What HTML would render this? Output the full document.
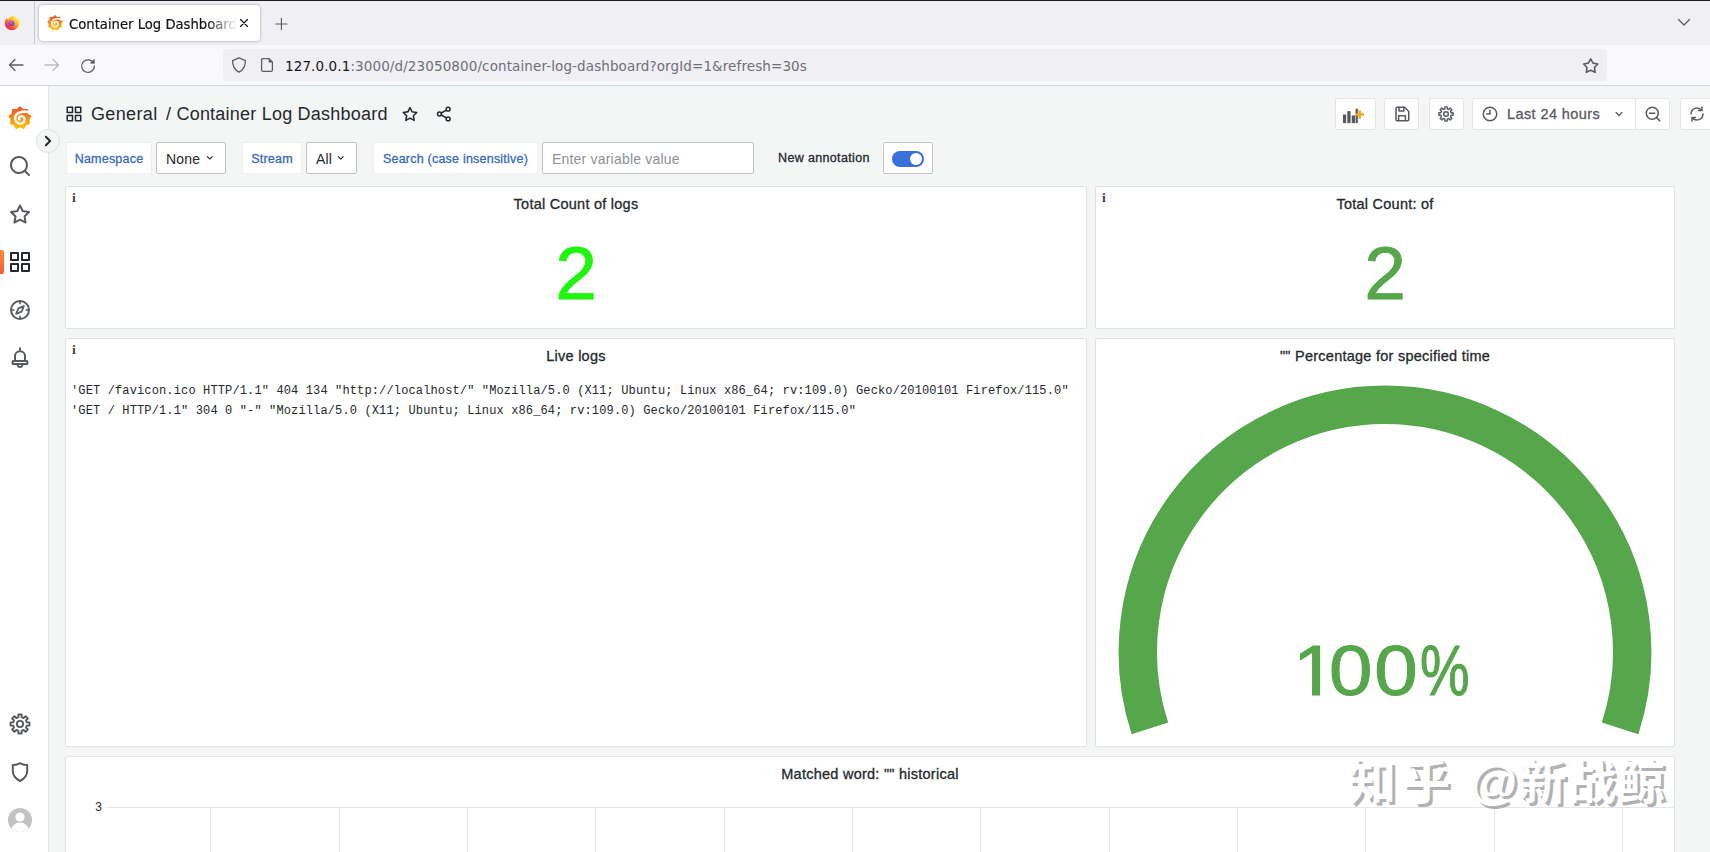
<!DOCTYPE html>
<html lang="en">
<head>
<meta charset="utf-8">
<title>Container Log Dashboard</title>
<style>
*{box-sizing:border-box;margin:0;padding:0}
html,body{width:1710px;height:852px;overflow:hidden;background:#f4f5f5}
body{font-family:"Liberation Sans","Noto Sans CJK SC",sans-serif;color:#24292e;position:relative}
.abs{position:absolute}
svg{display:block;overflow:visible}
/* ---------- browser chrome ---------- */
#tabbar{left:0;top:0;width:1710px;height:45px;background:#f0f0f4}
#topline{left:0;top:0;width:1710px;height:1px;background:#1c1b22}
#tabsep{left:34px;top:1px;width:1px;height:43px;background:#c9c9d0}
#tab{left:39px;top:5px;width:221px;height:36px;background:#fff;border-radius:4px;box-shadow:0 0 3px rgba(0,0,0,.35)}
#tabtitle{left:30px;top:10px;-webkit-text-stroke:.2px #15141a;width:169px;height:20px;font-family:'DejaVu Sans','Liberation Sans',sans-serif;font-size:13.2px;line-height:20px;color:#15141a;white-space:nowrap;overflow:hidden;-webkit-mask-image:linear-gradient(to right,#000 138px,transparent 168px);mask-image:linear-gradient(to right,#000 138px,transparent 168px)}
#navbar{left:0;top:45px;width:1710px;height:41px;background:#f9f9fb;border-bottom:1px solid #d4d4da}
#urlbar{left:223px;top:49px;width:1384px;height:32px;background:#f0f0f4;border-radius:4px}
#url{left:285px;top:56px;font-family:'DejaVu Sans','Liberation Sans',sans-serif;font-size:13.5px;letter-spacing:.11px;line-height:20px;color:#6f6f78;white-space:nowrap}
#url b{font-weight:normal;color:#15141a}
/* ---------- grafana ---------- */
#side{left:0;top:86px;width:49px;height:766px;background:#fff;border-right:1px solid #e3e4e5}
#expander{left:36px;top:129px;width:24px;height:24px;border-radius:12px;background:#f4f5f5;border:1px solid #e0e1e2}
#active{left:0;top:250px;width:4px;height:24px;border-radius:0 2px 2px 0;background:linear-gradient(#ff8833,#f55f3e)}
.title{font-size:18px;line-height:24px;white-space:nowrap;color:#24292e}
.tbtn{top:98px;height:32px;background:#fff;border:1px solid #e4e5e6;border-radius:2px}
.lbl{top:142px;height:32px;background:#fff;border:1px solid #eef0f0;border-radius:2px;font-size:12.5px;letter-spacing:.22px;line-height:32px;color:#3a6ab8;-webkit-text-stroke:.3px #3a6ab8;text-align:center;white-space:nowrap}
.sel{top:142px;height:32px;background:#fff;border:1px solid #bfc1c3;border-radius:2px;font-size:14px;letter-spacing:.2px;line-height:33px;color:#24292e;white-space:nowrap}
.panel{background:#fff;border:1px solid #e1e2e3;border-radius:2px}
.ptitle{font-size:14.5px;letter-spacing:.25px;line-height:20px;color:#24292e;-webkit-text-stroke:.3px #24292e;text-align:center;white-space:nowrap}
.info{font-family:"Liberation Serif",serif;font-weight:bold;font-size:13.5px;line-height:14px;color:#3d4043}
.big{font-weight:normal;text-align:center;white-space:nowrap}
.log{font-family:"Liberation Mono",monospace;font-size:12px;line-height:20px;color:#24292e;white-space:pre;letter-spacing:.135px}
.vline{top:807px;width:1px;height:45px;background:#e6e7e8}
</style>
</head>
<body>
<!-- ======= Firefox chrome ======= -->
<div id="tabbar" class="abs"></div>
<div id="topline" class="abs"></div>
<div id="tabsep" class="abs"></div>
<div id="tab" class="abs">
  <div id="tabtitle" class="abs">Container Log Dashboard</div>
</div>
<div id="navbar" class="abs"></div>
<div id="urlbar" class="abs"></div>
<div id="url" class="abs"><b>127.0.0.1</b>:3000/d/23050800/container-log-dashboard?orgId=1&amp;refresh=30s</div>

<!-- firefox chrome icons -->
<svg class="abs" style="left:4px;top:15px" width="16" height="16" viewBox="0 0 16 16">
<defs><linearGradient id="ffg" x1="0.95" y1="0.1" x2="0.2" y2="0.95"><stop offset="0" stop-color="#fff0a0" stop-opacity=".55"/><stop offset="0.22" stop-color="#ffd93c"/><stop offset="0.5" stop-color="#ff9a1f"/><stop offset="0.78" stop-color="#fb3f43"/><stop offset="1" stop-color="#e2246e"/></linearGradient>
<radialGradient id="ffp" cx="0.45" cy="0.35" r="0.7"><stop offset="0" stop-color="#c07af5"/><stop offset="1" stop-color="#5a2abf"/></radialGradient></defs>
<path d="M8 1.2 C10 0.6 12.6 1.6 14 3.6 C15.6 5.8 15.8 9 14.4 11.4 C13 13.8 10.6 15.2 8 15.2 C4 15.2 0.8 12 0.8 8.2 C0.8 6 1.6 4.2 2.8 2.8 C3 3.6 3.4 4.2 4 4.6 C4.8 3 6.2 1.8 8 1.2 Z" fill="url(#ffg)"/>
<circle cx="7.4" cy="8.2" r="2.8" fill="url(#ffp)"/>
<path d="M4.2 7.2 C4.4 5.6 5.6 4.6 7.2 4.6 C6.4 5 6 5.4 5.8 6 C5.2 6.2 4.6 6.6 4.2 7.2Z" fill="#ff8a1a"/>
</svg>
<svg class="abs" style="left:47px;top:15px" width="16" height="16" viewBox="0 0 24 24">
<defs><linearGradient id="glg2" x1="0" y1="1" x2="0" y2="0"><stop offset="0" stop-color="#fbca0a"/><stop offset="1" stop-color="#ee4f27"/></linearGradient></defs>
<path d="M22.4 12.0 L22.2 12.4 L22.0 12.7 L21.8 13.0 L21.6 13.4 L21.6 13.7 L21.5 14.0 L21.5 14.4 L21.6 14.8 L21.7 15.1 L21.8 15.6 L22.0 16.0 L22.1 16.5 L22.2 17.0 L22.1 17.4 L22.0 17.8 L21.7 18.1 L21.4 18.3 L21.0 18.5 L20.5 18.6 L20.0 18.7 L19.6 18.8 L19.2 18.9 L18.8 19.1 L18.5 19.2 L18.2 19.4 L18.0 19.7 L17.8 20.0 L17.6 20.3 L17.4 20.6 L17.2 21.0 L17.0 21.5 L16.9 22.0 L16.6 22.4 L16.3 22.7 L16.0 22.9 L15.6 22.9 L15.1 22.9 L14.7 22.7 L14.2 22.5 L13.8 22.2 L13.4 22.1 L13.0 21.9 L12.7 21.8 L12.3 21.7 L12.0 21.7 L11.7 21.7 L11.3 21.8 L11.0 21.9 L10.6 22.1 L10.2 22.2 L9.8 22.5 L9.3 22.7 L8.9 22.9 L8.4 22.9 L8.0 22.9 L7.7 22.7 L7.4 22.4 L7.1 22.0 L7.0 21.5 L6.8 21.0 L6.6 20.6 L6.4 20.3 L6.2 20.0 L6.0 19.7 L5.8 19.4 L5.5 19.2 L5.2 19.1 L4.8 18.9 L4.4 18.8 L4.0 18.7 L3.5 18.6 L3.0 18.5 L2.6 18.3 L2.3 18.1 L2.0 17.8 L1.9 17.4 L1.8 17.0 L1.9 16.5 L2.0 16.0 L2.2 15.6 L2.3 15.1 L2.4 14.8 L2.5 14.4 L2.5 14.0 L2.4 13.7 L2.4 13.4 L2.2 13.0 L2.0 12.7 L1.8 12.4 L1.6 12.0 L1.3 11.6 L1.0 11.2 L0.7 10.8 L0.6 10.4 L0.6 10.0 L0.8 9.6 L1.0 9.3 L1.4 8.9 L1.8 8.7 L2.2 8.4 L2.6 8.2 L2.9 7.9 L3.2 7.7 L3.4 7.4 L3.6 7.1 L3.7 6.8 L3.8 6.5 L3.9 6.1 L4.0 5.7 L4.0 5.3 L4.0 4.8 L4.0 4.3 L4.1 3.8 L4.3 3.5 L4.6 3.2 L4.9 2.9 L5.3 2.8 L5.8 2.8 L6.3 2.9 L6.8 3.0 L7.2 3.0 L7.6 3.0 L8.0 3.0 L8.3 3.0 L8.7 2.9 L9.0 2.7 L9.3 2.5 L9.6 2.3 L9.9 2.0 L10.2 1.8 L10.5 1.3 L10.8 1.0 L11.2 0.7 L11.6 0.5 L12.0 0.4 L12.4 0.5 L12.8 0.7 L13.2 1.0 L13.5 1.3 L13.8 1.8 L14.1 2.0 L14.4 2.3 L14.7 2.5 L15.0 2.7 L15.3 2.9 L15.7 3.0 L16.0 3.0 L16.4 3.0 L16.8 3.0 L17.2 3.0 L17.7 2.9 L18.2 2.8 L18.7 2.8 L19.1 2.9 L19.4 3.2 L19.7 3.5 L19.9 3.8 L20.0 4.3 L20.0 4.8 L20.0 5.3 L20.0 5.7 L20.1 6.1 L20.2 6.5 L20.3 6.8 L20.4 7.1 L20.6 7.4 L20.8 7.7 L21.1 7.9 L21.4 8.2 L21.8 8.4 L22.2 8.7 L22.6 8.9 L23.0 9.3 L23.2 9.6 L23.4 10.0 L23.4 10.4 L23.3 10.8 L23.0 11.2 L22.7 11.6Z" fill="url(#glg2)"/>
<path d="M22.3 7.8 L20.4 6.5 L18.4 5.7 L16.4 5.5 L14.6 5.7 L13.0 6.3 L11.7 6.5 L10.4 7.0 L9.3 7.8 L8.4 8.7 L7.8 9.7 L7.3 10.9 L7.2 12.1 L7.3 13.3 L7.6 14.4 L8.1 15.4 L8.8 16.2 L9.7 16.9 L10.6 17.3 L11.6 17.5 L12.6 17.6 L13.6 17.4 L14.4 17.0 L15.2 16.4 L15.8 15.8 L16.2 15.0 L16.4 14.2 L16.5 13.4 L16.4 12.6 L16.2 11.9 L15.8 11.3 L15.3 10.8 L14.7 10.5 L14.1 10.2 L13.5 10.1 L12.9 10.2 L12.4 10.4 L11.9 10.6 L11.5 11.0 L11.2 11.4 L11.0 11.8 L11.0 12.2 L11.0 12.6 L11.1 13.0 L11.3 13.3 L11.5 13.6" fill="none" stroke="#fff" stroke-width="2.3" stroke-linecap="round" stroke-linejoin="round"/>
</svg>
<svg class="abs" style="left:236px;top:15px" width="16" height="16" viewBox="0 0 16 16"><path d="M4.5 4.5l7 7M11.5 4.5l-7 7" fill="none" stroke="#15141a" stroke-width="1.15" stroke-linecap="round"/></svg>
<svg class="abs" style="left:273px;top:16px" width="16" height="16" viewBox="0 0 16 16"><path d="M8.4 2.4v11.2M2.8 8h11.2" fill="none" stroke="#5b5b66" stroke-width="1.15" stroke-linecap="round"/></svg>
<svg class="abs" style="left:1676px;top:14px" width="16" height="16" viewBox="0 0 16 16"><path d="M2.5 5.5L8 11l5.5-5.5" fill="none" stroke="#5b5b66" stroke-width="1.3" stroke-linecap="round" stroke-linejoin="round"/></svg>
<svg class="abs" style="left:8px;top:57px" width="16" height="16" viewBox="0 0 16 16"><path d="M15 8H1.5M7 2.5L1.5 8 7 13.5" fill="none" stroke="#5b5b66" stroke-width="1.3" stroke-linecap="round" stroke-linejoin="round"/></svg>
<svg class="abs" style="left:44px;top:57px" width="16" height="16" viewBox="0 0 16 16"><path d="M1 8h13.5M9 2.5L14.5 8 9 13.5" fill="none" stroke="#b9b9c0" stroke-width="1.3" stroke-linecap="round" stroke-linejoin="round"/></svg>
<svg class="abs" style="left:80px;top:57px" width="16" height="16" viewBox="0 0 16 16"><path d="M13.6 6.2A6.3 6.3 0 1 0 14.3 9" fill="none" stroke="#5b5b66" stroke-width="1.3" stroke-linecap="round"/><path d="M14.6 1.6v5h-5z" fill="#5b5b66"/></svg>
<svg class="abs" style="left:231px;top:57px" width="16" height="16" viewBox="0 0 16 16"><path d="M8 0.9 L14.4 3.6 C14.6 9 12.2 13 8 15.2 C3.8 13 1.4 9 1.6 3.6 Z" fill="none" stroke="#5b5b66" stroke-width="1.3" stroke-linejoin="round"/></svg>
<svg class="abs" style="left:259px;top:57px" width="16" height="16" viewBox="0 0 16 16"><path d="M3.6 1.6H10L13.4 5V13a1.4 1.4 0 0 1-1.4 1.4H4A1.4 1.4 0 0 1 2.6 13V2.6A1 1 0 0 1 3.6 1.6Z" fill="none" stroke="#5b5b66" stroke-width="1.3" stroke-linejoin="round"/><path d="M9.6 1.6L13.4 5.4H9.6Z" fill="#5b5b66"/></svg>
<svg class="abs" style="left:1581.4px;top:55.6px" width="19.4" height="19.4" viewBox="0 0 24 24"><path d="M12.00 3.60L14.88 8.84L20.75 9.96L16.66 14.31L17.41 20.24L12.00 17.70L6.59 20.24L7.34 14.31L3.25 9.96L9.12 8.84Z" fill="none" stroke="#5b5b66" stroke-width="2" stroke-linejoin="round"/></svg>

<!-- ======= Grafana ======= -->
<div id="side" class="abs"></div>
<div id="active" class="abs"></div>
<div id="expander" class="abs"></div>

<div class="abs title" style="left:91px;top:102px;letter-spacing:.35px">General</div>
<div class="abs title" style="left:166px;top:102px;letter-spacing:.22px">/ Container Log Dashboard</div>

<div class="abs tbtn" style="left:1335px;width:41px"></div>
<div class="abs tbtn" style="left:1384px;width:35px"></div>
<div class="abs tbtn" style="left:1429px;width:35px"></div>
<div class="abs tbtn" style="left:1472px;width:164px"></div>
<div class="abs tbtn" style="left:1635px;width:35px"></div>
<div class="abs tbtn" style="left:1680px;width:40px"></div>
<div class="abs" id="tptext" style="left:1507px;top:104px;font-size:14.5px;letter-spacing:.4px;line-height:20px;color:#575b5f;-webkit-text-stroke:.3px #575b5f;white-space:nowrap">Last 24 hours</div>

<div class="abs lbl" style="left:66px;width:86px">Namespace</div>
<div class="abs sel" style="left:156px;width:70px;padding-left:9px">None</div>
<div class="abs lbl" style="left:242px;width:60px">Stream</div>
<div class="abs sel" style="left:306px;width:51px;padding-left:9px">All</div>
<div class="abs lbl" style="left:373px;width:165px">Search (case insensitive)</div>
<div class="abs sel" style="left:542px;width:212px;padding-left:9px;color:#8e9194">Enter variable value</div>
<div class="abs" id="newann" style="left:778px;top:149px;font-size:12.5px;letter-spacing:.35px;line-height:18px;color:#24292e;-webkit-text-stroke:.3px #24292e;white-space:nowrap">New annotation</div>
<div class="abs sel" style="left:883px;width:50px;border-color:#c4c6c8"></div>
<div class="abs" style="left:892px;top:151px;width:32px;height:16px;border-radius:8px;background:#3871dc"></div>
<div class="abs" style="left:910px;top:153px;width:12px;height:12px;border-radius:6px;background:#fff"></div>

<!-- sidebar icons -->
<svg class="abs" style="left:8px;top:105.5px" width="24" height="24" viewBox="0 0 24 24">
<defs><linearGradient id="glg" x1="0" y1="1" x2="0" y2="0"><stop offset="0" stop-color="#fbca0a"/><stop offset="1" stop-color="#ee4f27"/></linearGradient></defs>
<path d="M22.4 12.0 L22.2 12.4 L22.0 12.7 L21.8 13.0 L21.6 13.4 L21.6 13.7 L21.5 14.0 L21.5 14.4 L21.6 14.8 L21.7 15.1 L21.8 15.6 L22.0 16.0 L22.1 16.5 L22.2 17.0 L22.1 17.4 L22.0 17.8 L21.7 18.1 L21.4 18.3 L21.0 18.5 L20.5 18.6 L20.0 18.7 L19.6 18.8 L19.2 18.9 L18.8 19.1 L18.5 19.2 L18.2 19.4 L18.0 19.7 L17.8 20.0 L17.6 20.3 L17.4 20.6 L17.2 21.0 L17.0 21.5 L16.9 22.0 L16.6 22.4 L16.3 22.7 L16.0 22.9 L15.6 22.9 L15.1 22.9 L14.7 22.7 L14.2 22.5 L13.8 22.2 L13.4 22.1 L13.0 21.9 L12.7 21.8 L12.3 21.7 L12.0 21.7 L11.7 21.7 L11.3 21.8 L11.0 21.9 L10.6 22.1 L10.2 22.2 L9.8 22.5 L9.3 22.7 L8.9 22.9 L8.4 22.9 L8.0 22.9 L7.7 22.7 L7.4 22.4 L7.1 22.0 L7.0 21.5 L6.8 21.0 L6.6 20.6 L6.4 20.3 L6.2 20.0 L6.0 19.7 L5.8 19.4 L5.5 19.2 L5.2 19.1 L4.8 18.9 L4.4 18.8 L4.0 18.7 L3.5 18.6 L3.0 18.5 L2.6 18.3 L2.3 18.1 L2.0 17.8 L1.9 17.4 L1.8 17.0 L1.9 16.5 L2.0 16.0 L2.2 15.6 L2.3 15.1 L2.4 14.8 L2.5 14.4 L2.5 14.0 L2.4 13.7 L2.4 13.4 L2.2 13.0 L2.0 12.7 L1.8 12.4 L1.6 12.0 L1.3 11.6 L1.0 11.2 L0.7 10.8 L0.6 10.4 L0.6 10.0 L0.8 9.6 L1.0 9.3 L1.4 8.9 L1.8 8.7 L2.2 8.4 L2.6 8.2 L2.9 7.9 L3.2 7.7 L3.4 7.4 L3.6 7.1 L3.7 6.8 L3.8 6.5 L3.9 6.1 L4.0 5.7 L4.0 5.3 L4.0 4.8 L4.0 4.3 L4.1 3.8 L4.3 3.5 L4.6 3.2 L4.9 2.9 L5.3 2.8 L5.8 2.8 L6.3 2.9 L6.8 3.0 L7.2 3.0 L7.6 3.0 L8.0 3.0 L8.3 3.0 L8.7 2.9 L9.0 2.7 L9.3 2.5 L9.6 2.3 L9.9 2.0 L10.2 1.8 L10.5 1.3 L10.8 1.0 L11.2 0.7 L11.6 0.5 L12.0 0.4 L12.4 0.5 L12.8 0.7 L13.2 1.0 L13.5 1.3 L13.8 1.8 L14.1 2.0 L14.4 2.3 L14.7 2.5 L15.0 2.7 L15.3 2.9 L15.7 3.0 L16.0 3.0 L16.4 3.0 L16.8 3.0 L17.2 3.0 L17.7 2.9 L18.2 2.8 L18.7 2.8 L19.1 2.9 L19.4 3.2 L19.7 3.5 L19.9 3.8 L20.0 4.3 L20.0 4.8 L20.0 5.3 L20.0 5.7 L20.1 6.1 L20.2 6.5 L20.3 6.8 L20.4 7.1 L20.6 7.4 L20.8 7.7 L21.1 7.9 L21.4 8.2 L21.8 8.4 L22.2 8.7 L22.6 8.9 L23.0 9.3 L23.2 9.6 L23.4 10.0 L23.4 10.4 L23.3 10.8 L23.0 11.2 L22.7 11.6Z" fill="url(#glg)"/>
<path d="M22.3 7.8 L20.4 6.5 L18.4 5.7 L16.4 5.5 L14.6 5.7 L13.0 6.3 L11.7 6.5 L10.4 7.0 L9.3 7.8 L8.4 8.7 L7.8 9.7 L7.3 10.9 L7.2 12.1 L7.3 13.3 L7.6 14.4 L8.1 15.4 L8.8 16.2 L9.7 16.9 L10.6 17.3 L11.6 17.5 L12.6 17.6 L13.6 17.4 L14.4 17.0 L15.2 16.4 L15.8 15.8 L16.2 15.0 L16.4 14.2 L16.5 13.4 L16.4 12.6 L16.2 11.9 L15.8 11.3 L15.3 10.8 L14.7 10.5 L14.1 10.2 L13.5 10.1 L12.9 10.2 L12.4 10.4 L11.9 10.6 L11.5 11.0 L11.2 11.4 L11.0 11.8 L11.0 12.2 L11.0 12.6 L11.1 13.0 L11.3 13.3 L11.5 13.6" fill="none" stroke="#fff" stroke-width="2.4" stroke-linecap="round" stroke-linejoin="round"/>
</svg>
<svg class="abs" style="left:36px;top:129px" width="24" height="24" viewBox="0 0 24 24" id="expchev"><path d="M14.83,11.29,10.59,7.05a1,1,0,0,0-1.42,0,1,1,0,0,0,0,1.41L12.71,12,9.17,15.54a1,1,0,0,0,0,1.41,1,1,0,0,0,.71.29,1,1,0,0,0,.71-.29l4.24-4.24A1,1,0,0,0,14.83,11.29Z" fill="#24292e"/></svg>
<svg class="abs" style="left:8px;top:154px" width="24" height="24" viewBox="0 0 24 24" ><path d="M21.71,20.29,18,16.61A9,9,0,1,0,16.61,18l3.68,3.68a1,1,0,0,0,1.42,0A1,1,0,0,0,21.71,20.29ZM11,18a7,7,0,1,1,7-7A7,7,0,0,1,11,18Z" fill="#575b5f"/></svg>
<svg class="abs" style="left:8px;top:202px" width="24" height="24" viewBox="0 0 24 24" ><path d="M22,9.67A1,1,0,0,0,21.14,9l-5.69-.83L12.9,3a1,1,0,0,0-1.8,0L8.55,8.16,2.86,9a1,1,0,0,0-.81.68,1,1,0,0,0,.25,1l4.13,4-1,5.68A1,1,0,0,0,6.9,21.44L12,18.77l5.1,2.67a.93.93,0,0,0,.46.12,1,1,0,0,0,.59-.19,1,1,0,0,0,.4-1l-1-5.68,4.13-4A1,1,0,0,0,22,9.67Zm-6.15,4a1,1,0,0,0-.29.88l.72,4.2-3.76-2a1.06,1.06,0,0,0-.94,0l-3.76,2,.72-4.2a1,1,0,0,0-.29-.88l-3-3,4.21-.61a1,1,0,0,0,.76-.55L12,5.7l1.88,3.82a1,1,0,0,0,.76.55l4.21.61Z" fill="#575b5f"/></svg>
<svg class="abs" style="left:8px;top:250px" width="24" height="24" viewBox="0 0 24 24" ><path d="M10,13H3a1,1,0,0,0-1,1v7a1,1,0,0,0,1,1h7a1,1,0,0,0,1-1V14A1,1,0,0,0,10,13ZM9,20H4V15H9ZM21,2H14a1,1,0,0,0-1,1v7a1,1,0,0,0,1,1h7a1,1,0,0,0,1-1V3A1,1,0,0,0,21,2ZM20,9H15V4h5Zm1,4H14a1,1,0,0,0-1,1v7a1,1,0,0,0,1,1h7a1,1,0,0,0,1-1V14A1,1,0,0,0,21,13Zm-1,7H15V15h5ZM10,2H3A1,1,0,0,0,2,3v7a1,1,0,0,0,1,1h7a1,1,0,0,0,1-1V3A1,1,0,0,0,10,2ZM9,9H4V4H9Z" fill="#24292e"/></svg>
<svg class="abs" style="left:8px;top:298px" width="24" height="24" viewBox="0 0 24 24" ><circle cx="12" cy="12" r="9" fill="none" stroke="#575b5f" stroke-width="2" stroke-linecap="round" stroke-linejoin="round"/><path d="M12 4.2V5.8M12 18.2v1.6M4.2 12h1.6M18.2 12h1.6" fill="none" stroke="#575b5f" stroke-width="1.6" stroke-linecap="round" stroke-linejoin="round"/><path d="M15.9 8.1 L13.6 13.6 L8.1 15.9 L10.4 10.4 Z" fill="none" stroke="#575b5f" stroke-width="1.7" stroke-linecap="round" stroke-linejoin="round"/></svg>
<svg class="abs" style="left:8px;top:346px" width="24" height="24" viewBox="0 0 24 24" ><path d="M12 2.2V4" fill="none" stroke="#575b5f" stroke-width="2" stroke-linecap="round" stroke-linejoin="round"/><path d="M7 15V10.2a5 5 0 0 1 10 0V15" fill="none" stroke="#575b5f" stroke-width="2" stroke-linecap="round" stroke-linejoin="round"/><rect x="4.6" y="15" width="14.8" height="3" rx="0.6" fill="none" stroke="#575b5f" stroke-width="2" stroke-linecap="round" stroke-linejoin="round"/><path d="M9.6 19.2a2.5 2.5 0 0 0 4.8 0" fill="none" stroke="#575b5f" stroke-width="2" stroke-linecap="round" stroke-linejoin="round"/></svg>
<svg class="abs" style="left:8px;top:712px" width="24" height="24" viewBox="0 0 24 24" ><path d="M10.37 5.19 L10.35 2.54 L13.65 2.54 L13.63 5.19 L15.66 6.03 L17.52 4.15 L19.85 6.48 L17.97 8.34 L18.81 10.37 L21.46 10.35 L21.46 13.65 L18.81 13.63 L17.97 15.66 L19.85 17.52 L17.52 19.85 L15.66 17.97 L13.63 18.81 L13.65 21.46 L10.35 21.46 L10.37 18.81 L8.34 17.97 L6.48 19.85 L4.15 17.52 L6.03 15.66 L5.19 13.63 L2.54 13.65 L2.54 10.35 L5.19 10.37 L6.03 8.34 L4.15 6.48 L6.48 4.15 L8.34 6.03 Z" fill="none" stroke="#575b5f" stroke-width="1.9" stroke-linecap="round" stroke-linejoin="round"/><circle cx="12" cy="12" r="3.1" fill="none" stroke="#575b5f" stroke-width="1.9" stroke-linecap="round" stroke-linejoin="round"/></svg>
<svg class="abs" style="left:8px;top:760px" width="24" height="24" viewBox="0 0 24 24" ><path d="M12 3.2 C14.2 4.6 16.6 5.2 19.2 5 V11 C19.2 15.6 16.2 18.8 12 21 C7.8 18.8 4.8 15.6 4.8 11 V5 C7.4 5.2 9.8 4.6 12 3.2 Z" fill="none" stroke="#575b5f" stroke-width="2" stroke-linecap="round" stroke-linejoin="round"/></svg>
<svg class="abs" style="left:8px;top:808px" width="24" height="24" viewBox="0 0 24 24"><defs><clipPath id="avc"><circle cx="12" cy="12" r="12"/></clipPath></defs><circle cx="12" cy="12" r="12" fill="#c2c2c2"/><g clip-path="url(#avc)"><circle cx="12" cy="9" r="4.6" fill="#fff"/><ellipse cx="12" cy="22" rx="8.5" ry="7.5" fill="#fff"/></g></svg>
<!-- title icons -->
<svg class="abs" style="left:64.75px;top:104.5px" width="18" height="18" viewBox="0 0 24 24" ><path d="M10,13H3a1,1,0,0,0-1,1v7a1,1,0,0,0,1,1h7a1,1,0,0,0,1-1V14A1,1,0,0,0,10,13ZM9,20H4V15H9ZM21,2H14a1,1,0,0,0-1,1v7a1,1,0,0,0,1,1h7a1,1,0,0,0,1-1V3A1,1,0,0,0,21,2ZM20,9H15V4h5Zm1,4H14a1,1,0,0,0-1,1v7a1,1,0,0,0,1,1h7a1,1,0,0,0,1-1V14A1,1,0,0,0,21,13Zm-1,7H15V15h5ZM10,2H3A1,1,0,0,0,2,3v7a1,1,0,0,0,1,1h7a1,1,0,0,0,1-1V3A1,1,0,0,0,10,2ZM9,9H4V4H9Z" fill="#24292e"/></svg>
<svg class="abs" style="left:401px;top:105px" width="18" height="18" viewBox="0 0 24 24" ><path d="M22,9.67A1,1,0,0,0,21.14,9l-5.69-.83L12.9,3a1,1,0,0,0-1.8,0L8.55,8.16,2.86,9a1,1,0,0,0-.81.68,1,1,0,0,0,.25,1l4.13,4-1,5.68A1,1,0,0,0,6.9,21.44L12,18.77l5.1,2.67a.93.93,0,0,0,.46.12,1,1,0,0,0,.59-.19,1,1,0,0,0,.4-1l-1-5.68,4.13-4A1,1,0,0,0,22,9.67Zm-6.15,4a1,1,0,0,0-.29.88l.72,4.2-3.76-2a1.06,1.06,0,0,0-.94,0l-3.76,2,.72-4.2a1,1,0,0,0-.29-.88l-3-3,4.21-.61a1,1,0,0,0,.76-.55L12,5.7l1.88,3.82a1,1,0,0,0,.76.55l4.21.61Z" fill="#24292e"/></svg>
<svg class="abs" style="left:435px;top:105px" width="18" height="18" viewBox="0 0 24 24" ><circle cx="17.5" cy="5.5" r="2.6" fill="none" stroke="#24292e" stroke-width="2" stroke-linecap="round" stroke-linejoin="round"/><circle cx="17.5" cy="18.5" r="2.6" fill="none" stroke="#24292e" stroke-width="2" stroke-linecap="round" stroke-linejoin="round"/><circle cx="6" cy="12" r="2.6" fill="none" stroke="#24292e" stroke-width="2" stroke-linecap="round" stroke-linejoin="round"/><path d="M8.3 10.7 L15.2 6.8M8.3 13.3l6.9 3.9" fill="none" stroke="#24292e" stroke-width="2" stroke-linecap="round" stroke-linejoin="round"/></svg>
<!-- toolbar icons -->
<svg class="abs" style="left:1341px;top:103px" width="23" height="23" viewBox="0 0 24 24" ><rect x="2" y="12" width="3.4" height="9" fill="#575b5f"/><rect x="6.6" y="8.5" width="3.4" height="12.5" fill="#575b5f"/><rect x="11.2" y="13" width="3.4" height="8" fill="#575b5f"/><rect x="15.2" y="6" width="2.4" height="15" fill="#575b5f"/><path d="M19.5 7.5v9M15.5 12h8.5" fill="none" stroke="#f5a623" stroke-width="2.6"/></svg>
<svg class="abs" style="left:1393px;top:105px" width="18" height="18" viewBox="0 0 24 24" ><path d="M4 4.6a1.6 1.6 0 0 1 1.6-1.6H15.4L21 8.6V19.4a1.6 1.6 0 0 1-1.6 1.6H5.6A1.6 1.6 0 0 1 4 19.4Z" fill="none" stroke="#575b5f" stroke-width="2" stroke-linecap="round" stroke-linejoin="round"/><path d="M8 3.4V8h6.5V3.4" fill="none" stroke="#575b5f" stroke-width="2" stroke-linecap="round" stroke-linejoin="round"/><path d="M7.5 20.6V14.4h9v6.2" fill="none" stroke="#575b5f" stroke-width="2" stroke-linecap="round" stroke-linejoin="round"/></svg>
<svg class="abs" style="left:1437px;top:105px" width="18" height="18" viewBox="0 0 24 24" ><path d="M10.37 5.19 L10.35 2.54 L13.65 2.54 L13.63 5.19 L15.66 6.03 L17.52 4.15 L19.85 6.48 L17.97 8.34 L18.81 10.37 L21.46 10.35 L21.46 13.65 L18.81 13.63 L17.97 15.66 L19.85 17.52 L17.52 19.85 L15.66 17.97 L13.63 18.81 L13.65 21.46 L10.35 21.46 L10.37 18.81 L8.34 17.97 L6.48 19.85 L4.15 17.52 L6.03 15.66 L5.19 13.63 L2.54 13.65 L2.54 10.35 L5.19 10.37 L6.03 8.34 L4.15 6.48 L6.48 4.15 L8.34 6.03 Z" fill="none" stroke="#575b5f" stroke-width="1.9" stroke-linecap="round" stroke-linejoin="round"/><circle cx="12" cy="12" r="3.1" fill="none" stroke="#575b5f" stroke-width="1.9" stroke-linecap="round" stroke-linejoin="round"/></svg>
<svg class="abs" style="left:1481px;top:105px" width="18" height="18" viewBox="0 0 24 24" ><circle cx="12" cy="12" r="9" fill="none" stroke="#575b5f" stroke-width="2" stroke-linecap="round" stroke-linejoin="round"/><path d="M12 7v5H7.6" fill="none" stroke="#575b5f" stroke-width="2" stroke-linecap="round" stroke-linejoin="round"/></svg>
<svg class="abs" style="left:1611px;top:106px" width="16" height="16" viewBox="0 0 24 24" ><path d="M17,9.17a1,1,0,0,0-1.41,0L12,12.71,8.46,9.17a1,1,0,0,0-1.41,0,1,1,0,0,0,0,1.42l4.24,4.24a1,1,0,0,0,1.42,0L17,10.59A1,1,0,0,0,17,9.17Z" fill="#575b5f"/></svg>
<svg class="abs" style="left:1644px;top:105px" width="18" height="18" viewBox="0 0 24 24" ><circle cx="11" cy="11" r="8" fill="none" stroke="#575b5f" stroke-width="2" stroke-linecap="round" stroke-linejoin="round"/><path d="M16.8 16.8 L21 21M7.5 11h7" fill="none" stroke="#575b5f" stroke-width="2" stroke-linecap="round" stroke-linejoin="round"/></svg>
<svg class="abs" style="left:1688px;top:105px" width="18" height="18" viewBox="0 0 24 24" ><path d="M20 12a8 8 0 0 1-14.2 5M4 12A8 8 0 0 1 18.2 7" fill="none" stroke="#575b5f" stroke-width="2" stroke-linecap="round" stroke-linejoin="round"/><path d="M18.6 2.8V7.2H14.2M5.4 21.2V16.8h4.4" fill="none" stroke="#575b5f" stroke-width="2" stroke-linecap="round" stroke-linejoin="round"/></svg>
<svg class="abs" style="left:203.2px;top:151.2px" width="13.6" height="13.6" viewBox="0 0 24 24" ><path d="M17,9.17a1,1,0,0,0-1.41,0L12,12.71,8.46,9.17a1,1,0,0,0-1.41,0,1,1,0,0,0,0,1.42l4.24,4.24a1,1,0,0,0,1.42,0L17,10.59A1,1,0,0,0,17,9.17Z" fill="#24292e"/></svg>
<svg class="abs" style="left:334.2px;top:151.2px" width="13.6" height="13.6" viewBox="0 0 24 24" ><path d="M17,9.17a1,1,0,0,0-1.41,0L12,12.71,8.46,9.17a1,1,0,0,0-1.41,0,1,1,0,0,0,0,1.42l4.24,4.24a1,1,0,0,0,1.42,0L17,10.59A1,1,0,0,0,17,9.17Z" fill="#24292e"/></svg>

<!-- panels -->
<div class="abs panel" style="left:65px;top:186px;width:1022px;height:143px"></div>
<div class="abs panel" style="left:1095px;top:186px;width:580px;height:143px"></div>
<div class="abs panel" style="left:65px;top:338px;width:1022px;height:409px"></div>
<div class="abs panel" style="left:1095px;top:338px;width:580px;height:409px"></div>
<div class="abs panel" style="left:65px;top:756px;width:1610px;height:120px"></div>

<div class="abs info" style="left:72px;top:191px">i</div>
<div class="abs info" style="left:1102px;top:191px">i</div>
<div class="abs info" style="left:72px;top:343px">i</div>

<div class="abs ptitle" style="left:66px;width:1020px;top:193.5px">Total Count of logs</div>
<div class="abs ptitle" style="left:1096px;width:578px;top:193.5px">Total Count: of</div>
<div class="abs ptitle" style="left:66px;width:1020px;top:345.5px">Live logs</div>
<div class="abs ptitle" style="left:1096px;width:578px;top:345.5px">"" Percentage for specified time</div>
<div class="abs ptitle" style="left:66px;width:1608px;top:763.5px">Matched word: "" historical</div>

<div class="abs big" id="big1" style="left:66px;width:1020px;top:235px;font-size:75px;line-height:76px;color:#1ff50e;-webkit-text-stroke:.8px #1ff50e">2</div>
<div class="abs big" id="big2" style="left:1096px;width:578px;top:235px;font-size:75px;line-height:76px;color:#56a64b;-webkit-text-stroke:.8px #56a64b">2</div>

<div class="abs log" id="log1" style="left:71px;top:381px">'GET /favicon.ico HTTP/1.1" 404 134 "http://localhost/" "Mozilla/5.0 (X11; Ubuntu; Linux x86_64; rv:109.0) Gecko/20100101 Firefox/115.0"</div>
<div class="abs log" id="log2" style="left:71px;top:401px">'GET / HTTP/1.1" 304 0 "-" "Mozilla/5.0 (X11; Ubuntu; Linux x86_64; rv:109.0) Gecko/20100101 Firefox/115.0"</div>

<!-- gauge -->
<svg class="abs" id="gauge" style="left:1096px;top:339px" width="578" height="407" viewBox="1096 339 578 407">
  <path id="arc" d="M 1149.9 728.4 A 247.2 247.2 0 1 1 1620.1 728.4" fill="none" stroke="#56a64b" stroke-width="38.4"/>
</svg>
<div class="abs big" id="pct" style="left:1293.0px;top:635px;text-align:left;font-size:71px;line-height:72px;color:#56a64b;-webkit-text-stroke:1px #56a64b"><span style="display:inline-block;transform:scaleX(1.1);transform-origin:0 50%;margin-right:-4.0px">1</span><span style="display:inline-block;transform:scaleX(1.1);transform-origin:0 50%;letter-spacing:1.7px;margin-right:9.0px">00</span><span style="display:inline-block;transform:scaleX(0.785);transform-origin:0 50%">%</span></div>
<div class="abs" style="left:1296px;top:688.5px;width:15.6px;height:8px;background:#fff"></div>
<div class="abs" style="left:1320.4px;top:688.5px;width:14.6px;height:8px;background:#fff"></div>

<!-- bottom chart -->
<div class="abs" id="ytick" style="left:80px;top:799px;width:22px;text-align:right;font-size:12px;line-height:16px;color:#24292e">3</div>
<div class="abs" style="left:107px;top:807px;width:1567px;height:1px;background:#e6e7e8"></div>
<div class="abs vline" style="left:210px"></div>
<div class="abs vline" style="left:339px"></div>
<div class="abs vline" style="left:467px"></div>
<div class="abs vline" style="left:595px"></div>
<div class="abs vline" style="left:724px"></div>
<div class="abs vline" style="left:852px"></div>
<div class="abs vline" style="left:980px"></div>
<div class="abs vline" style="left:1109px"></div>
<div class="abs vline" style="left:1237px"></div>
<div class="abs vline" style="left:1365px"></div>
<div class="abs vline" style="left:1494px"></div>
<div class="abs vline" style="left:1622px"></div>

<!-- watermark -->
<div class="abs" id="wm" style="left:1348px;top:751px;font-family:'Liberation Sans','Noto Sans CJK SC',sans-serif;font-size:48px;line-height:64px;font-weight:bold;color:#fff;white-space:nowrap;letter-spacing:1.2px;text-shadow:3px 3px 0 #b2b2b2"><span style="letter-spacing:6px">知乎</span> @新战鲸</div>
</body>
</html>
